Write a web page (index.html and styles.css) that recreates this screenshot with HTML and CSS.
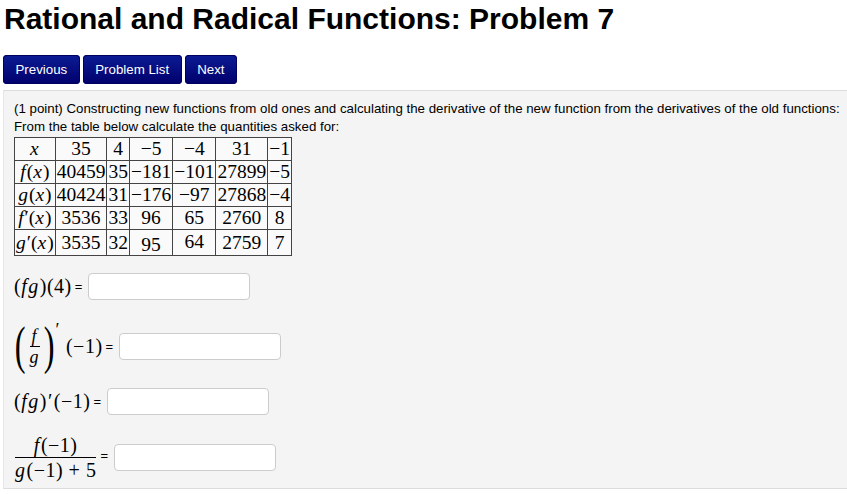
FILE: index.html
```html
<!DOCTYPE html>
<html>
<head>
    <link rel="stylesheet" href="styles.css">
</head>
<body>
    <h1 class="title">Rational and Radical Functions: Problem 7</h1>

    <div class="nav">
        <a class="nav-btn" href="#">Previous</a>
        <a class="nav-btn" href="#">Problem List</a>
        <a class="nav-btn" href="#">Next</a>
    </div>

    <div class="problem">
        <p class="intro">(1 point) Constructing new functions from old ones and calculating the derivative of the new function from the derivatives of the old functions:<br>
        From the table below calculate the quantities asked for:</p>

        <table class="values">
            <tr>
                <td><i>x</i></td><td>35</td><td>4</td><td>&minus;5</td><td>&minus;4</td><td>31</td><td>&minus;1</td>
            </tr>
            <tr>
                <td><i>f</i>(<i>x</i>)</td><td>40459</td><td>35</td><td>&minus;181</td><td>&minus;101</td><td>27899</td><td>&minus;5</td>
            </tr>
            <tr>
                <td><i>g</i>(<i>x</i>)</td><td>40424</td><td>31</td><td>&minus;176</td><td>&minus;97</td><td>27868</td><td>&minus;4</td>
            </tr>
            <tr>
                <td><i>f</i>&prime;(<i>x</i>)</td><td>3536</td><td>33</td><td>96</td><td>65</td><td>2760</td><td>8</td>
            </tr>
            <tr>
                <td><i>g</i>&prime;(<i>x</i>)</td><td>3535</td><td>32</td><td class="low">95</td><td class="high">64</td><td>2759</td><td>7</td>
            </tr>
        </table>

        <div class="question first">
            <span class="math">(<i>f</i><i>g</i>)(4)</span>
            <span class="eq">=</span>
            <input class="answer" type="text">
        </div>

        <div class="question tall">
            <span class="math">
                <span class="big-paren">(</span><span class="frac small"><span class="num"><i>f</i></span><span class="den"><i>g</i></span></span><span class="big-paren">)</span><span class="prime">&prime;</span>
                <span class="arg">(&minus;1)</span>
            </span>
            <span class="eq">=</span>
            <input class="answer" type="text">
        </div>

        <div class="question after-tall">
            <span class="math">(<i>f</i><i>g</i>)<span class="pr">&prime;</span>(&minus;1)</span>
            <span class="eq">=</span>
            <input class="answer" type="text">
        </div>

        <div class="question">
            <span class="math">
                <span class="frac"><span class="num"><i>f</i>(&minus;1)</span><span class="den"><i>g</i>(&minus;1) + 5</span></span>
            </span>
            <span class="eq raised">=</span>
            <input class="answer" type="text">
        </div>
    </div>
</body>
</html>
```

FILE: styles.css
```css
body {
    margin: 0;
    font-family: "Liberation Sans", Arial, sans-serif;
    color: #000;
    background: #fff;
}

.title {
    font-size: 30px;
    font-weight: bold;
    margin: 0;
    padding: 2px 0 0 4px;
    line-height: 34px;
}

.nav {
    display: flex;
    gap: 3px;
    margin: 19px 0 0 3px;
}

.nav-btn {
    display: block;
    height: 29px;
    line-height: 29px;
    padding: 0 12.5px;
    font-size: 13.3px;
    color: #fff;
    text-decoration: none;
    background: linear-gradient(#0c1c94, #00006c);
    border-radius: 4px;
    box-shadow: inset 0 0 0 1px #00005e;
}

.problem {
    margin: 6px 0 0 3px;
    padding: 9px 0 8px 10px;
    background: #f4f4f4;
    border-top: 1px solid #dcdcdc;
    border-bottom: 1px solid #dcdcdc;
    border-left: 1px solid #e6e6e6;
}

.intro {
    margin: 0;
    font-size: 13.3px;
    line-height: 18px;
    white-space: nowrap;
}

/* table of values */
.values {
    border-collapse: collapse;
    margin-top: 1px;
    font-family: "Liberation Serif", "Times New Roman", serif;
    font-size: 19.5px;
    background: #fafafa;
}

.values td {
    border: 1px solid #444;
    text-align: center;
    padding: 0 1px;
    height: 22px;
    line-height: 20px;
}

.values i {
    padding-right: 1px;
}

.values .low {
    padding-top: 3px;
    line-height: 17px;
}

.values .high {
    padding-bottom: 2px;
    line-height: 18px;
}

/* questions */
.question {
    display: flex;
    align-items: center;
    margin-top: 20px;
}

.question.first {
    margin-top: 17px;
}

.question.tall {
    margin-top: 25px;
}

.question.after-tall {
    margin-top: 21px;
}

.math {
    display: inline-flex;
    align-items: center;
    font-family: "Liberation Serif", "Times New Roman", serif;
    font-size: 20px;
    letter-spacing: 0.5px;
}

.math i {
    padding-right: 1px;
}

.math .pr {
    margin: 0 1px;
}

.eq {
    font-size: 13px;
    margin: 0 6px 0 3px;
}

.eq.raised {
    margin: -4px 6px 0 3px;
}

.answer {
    width: 162px;
    height: 27px;
    box-sizing: border-box;
    border: 1px solid #ccc;
    border-radius: 4px;
    background: #fff;
}

.frac {
    display: inline-flex;
    flex-direction: column;
    align-items: center;
    margin: 0 1px;
}

.frac .num {
    border-bottom: 1px solid #000;
    padding: 0 3px 2px;
    line-height: 20px;
    align-self: stretch;
    text-align: center;
}

.frac .den {
    line-height: 20px;
    padding-top: 2px;
}

.frac.small {
    font-size: 18px;
    margin: 0 3px;
}

.frac.small .num {
    padding: 0 2px 1px;
    line-height: 18px;
}

.frac.small .den {
    line-height: 18px;
    padding-top: 1px;
}

.big-paren {
    font-size: 36px;
    line-height: 42px;
    transform: scale(0.9, 1.45);
}

.prime {
    align-self: flex-start;
    font-size: 18px;
    line-height: 18px;
    margin: -4px 6px 0 0;
}
```
